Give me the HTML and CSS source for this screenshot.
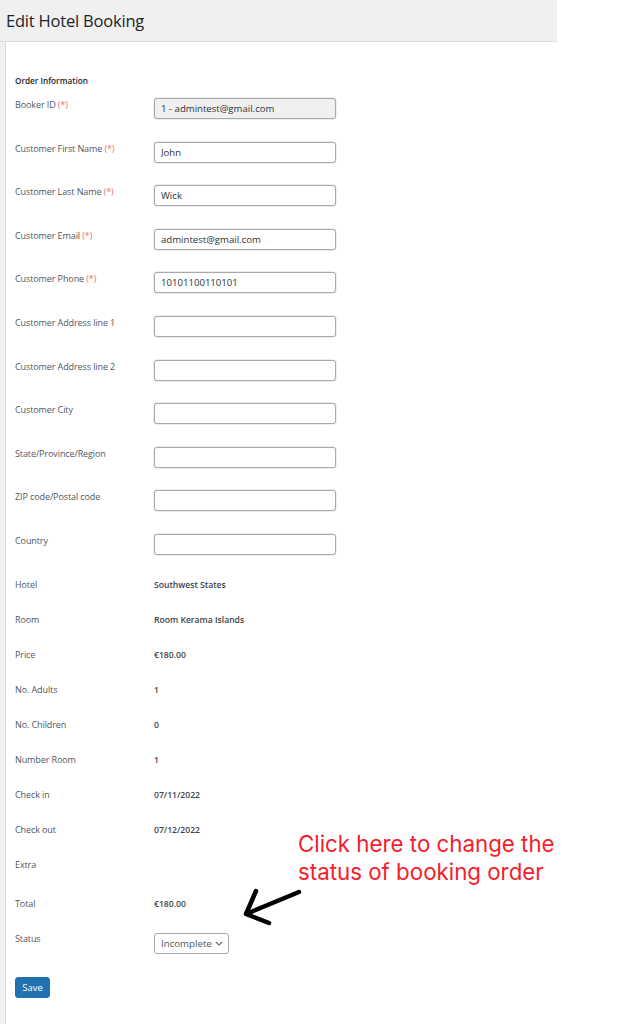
FILE: index.html
```html
<!DOCTYPE html>
<html lang="en">
<head>
<meta charset="utf-8">
<title>Edit Hotel Booking</title>
<link rel="stylesheet" href="styles.css">
</head>
<body>
<div class="page">
  <header class="topbar"><h1 class="title">Edit Hotel Booking</h1></header>
  <main class="card">
    <h2 class="section">Order Information</h2>
    <div class="inputs">
      <div class="row"><label class="lbl">Booker ID <span class="req">(*)</span></label><input class="field disabled" value="1 - admintest@gmail.com" readonly></div>
      <div class="row"><label class="lbl">Customer First Name <span class="req">(*)</span></label><input class="field" value="John"></div>
      <div class="row"><label class="lbl">Customer Last Name <span class="req">(*)</span></label><input class="field" value="Wick"></div>
      <div class="row"><label class="lbl">Customer Email <span class="req">(*)</span></label><input class="field" value="admintest@gmail.com"></div>
      <div class="row"><label class="lbl">Customer Phone <span class="req">(*)</span></label><input class="field" value="10101100110101"></div>
      <div class="row"><label class="lbl">Customer Address line 1</label><input class="field" value=""></div>
      <div class="row"><label class="lbl">Customer Address line 2</label><input class="field" value=""></div>
      <div class="row"><label class="lbl">Customer City</label><input class="field" value=""></div>
      <div class="row"><label class="lbl">State/Province/Region</label><input class="field" value=""></div>
      <div class="row"><label class="lbl">ZIP code/Postal code</label><input class="field" value=""></div>
      <div class="row"><label class="lbl">Country</label><input class="field" value=""></div>
    </div>
    <div class="info">
      <div class="row"><span class="lbl">Hotel</span><span class="val">Southwest States</span></div>
      <div class="row"><span class="lbl">Room</span><span class="val">Room Kerama Islands</span></div>
      <div class="row"><span class="lbl">Price</span><span class="val">€180.00</span></div>
      <div class="row"><span class="lbl">No. Adults</span><span class="val">1</span></div>
      <div class="row"><span class="lbl">No. Children</span><span class="val">0</span></div>
      <div class="row"><span class="lbl">Number Room</span><span class="val">1</span></div>
      <div class="row"><span class="lbl">Check in</span><span class="val">07/11/2022</span></div>
      <div class="row"><span class="lbl">Check out</span><span class="val">07/12/2022</span></div>
      <div class="row extra"><span class="lbl">Extra</span><span class="val"></span></div>
      <div class="row"><span class="lbl">Total</span><span class="val">€180.00</span></div>
      <div class="row"><span class="lbl">Status</span>
        <div class="select"><span>Incomplete</span><svg class="chev" viewBox="0 0 10 6" width="8" height="5"><path d="M1 1l4 4 4-4" fill="none" stroke="#50575e" stroke-width="1.3"/></svg></div>
      </div>
    </div>
    <button class="save">Save</button>
    <div class="note">Click here to change the<br>status of booking order</div>
    <svg class="arrow" width="70" height="45" viewBox="0 0 70 45"><path d="M60 5 L7 27 M17 4 L7 27 L30 36" fill="none" stroke="#000" stroke-width="4.5" stroke-linecap="round" stroke-linejoin="round"/></svg>
  </main>
</div>
</body>
</html>
```

FILE: styles.css
```css
html, body { margin: 0; padding: 0; background: #fff; }
body { font-family: "Open Sans", "Noto Sans", sans-serif; color: #3c434a; }
.page { width: 557px; background: #f0f0f1; min-height: 1024px; }
.topbar { height: 41px; border-bottom: 1px solid #dcdcde; display: flex; align-items: center; padding-left: 6px; }
.title { margin: 0; font-size: 16.5px; font-weight: 400; color: #1d2327; letter-spacing: -0.2px; }
.card { position: relative; margin-left: 5px; border-left: 1px solid #dcdcde; background: #fff; min-height: 982px; padding: 33px 0 0 9px; box-sizing: border-box; }
.section { margin: 0 0 11px; font-size: 8.2px; line-height: 12px; font-weight: 600; color: #1d2327; }
.inputs { display: flex; flex-direction: column; gap: 22.6px; }
.row { display: grid; grid-template-columns: 139px auto; align-items: start; }
.lbl { padding-top: 1px; font-size: 9px; line-height: 12px; color: #50575e; letter-spacing: -0.1px; }
.req { color: #f26b6b; }
.field { box-sizing: border-box; width: 182px; height: 21px; margin: 0; border: 1px solid #a7aaad; border-radius: 3px; padding: 0 6px; font-family: "Open Sans", sans-serif; font-size: 9.6px; color: #2c3338; background: #fff; outline: none; box-shadow: 0 0 0 0.5px #dcdcde; }
.field.disabled { background: #f0f0f1; border-color: #a7aaad; }
.info { display: flex; flex-direction: column; gap: 22px; margin-top: 23px; }
.val { padding-top: 1px; font-size: 8.6px; line-height: 12px; font-weight: 600; color: #3c434a; }
.extra { height: 17px; }
.select { box-sizing: border-box; margin-top: 1px; width: 75px; height: 21px; border: 1px solid #a7aaad; border-radius: 3px; display: flex; align-items: center; justify-content: space-between; padding: 0 5px 0 6px; font-size: 9.7px; color: #50575e; }
.chev { display: block; }
.save { display: block; margin-top: 23px; width: 35px; height: 21px; padding: 0; border: 1px solid #2271b1; border-radius: 3px; background: #2271b1; color: #fff; font-family: "Open Sans", sans-serif; font-size: 9.4px; }
.note { position: absolute; left: 292px; top: 788px; font-family: Inter, "Open Sans", sans-serif; font-size: 22.3px; line-height: 28px; color: #f5202a; white-space: nowrap; }
.arrow { position: absolute; left: 233px; top: 845px; }
```
